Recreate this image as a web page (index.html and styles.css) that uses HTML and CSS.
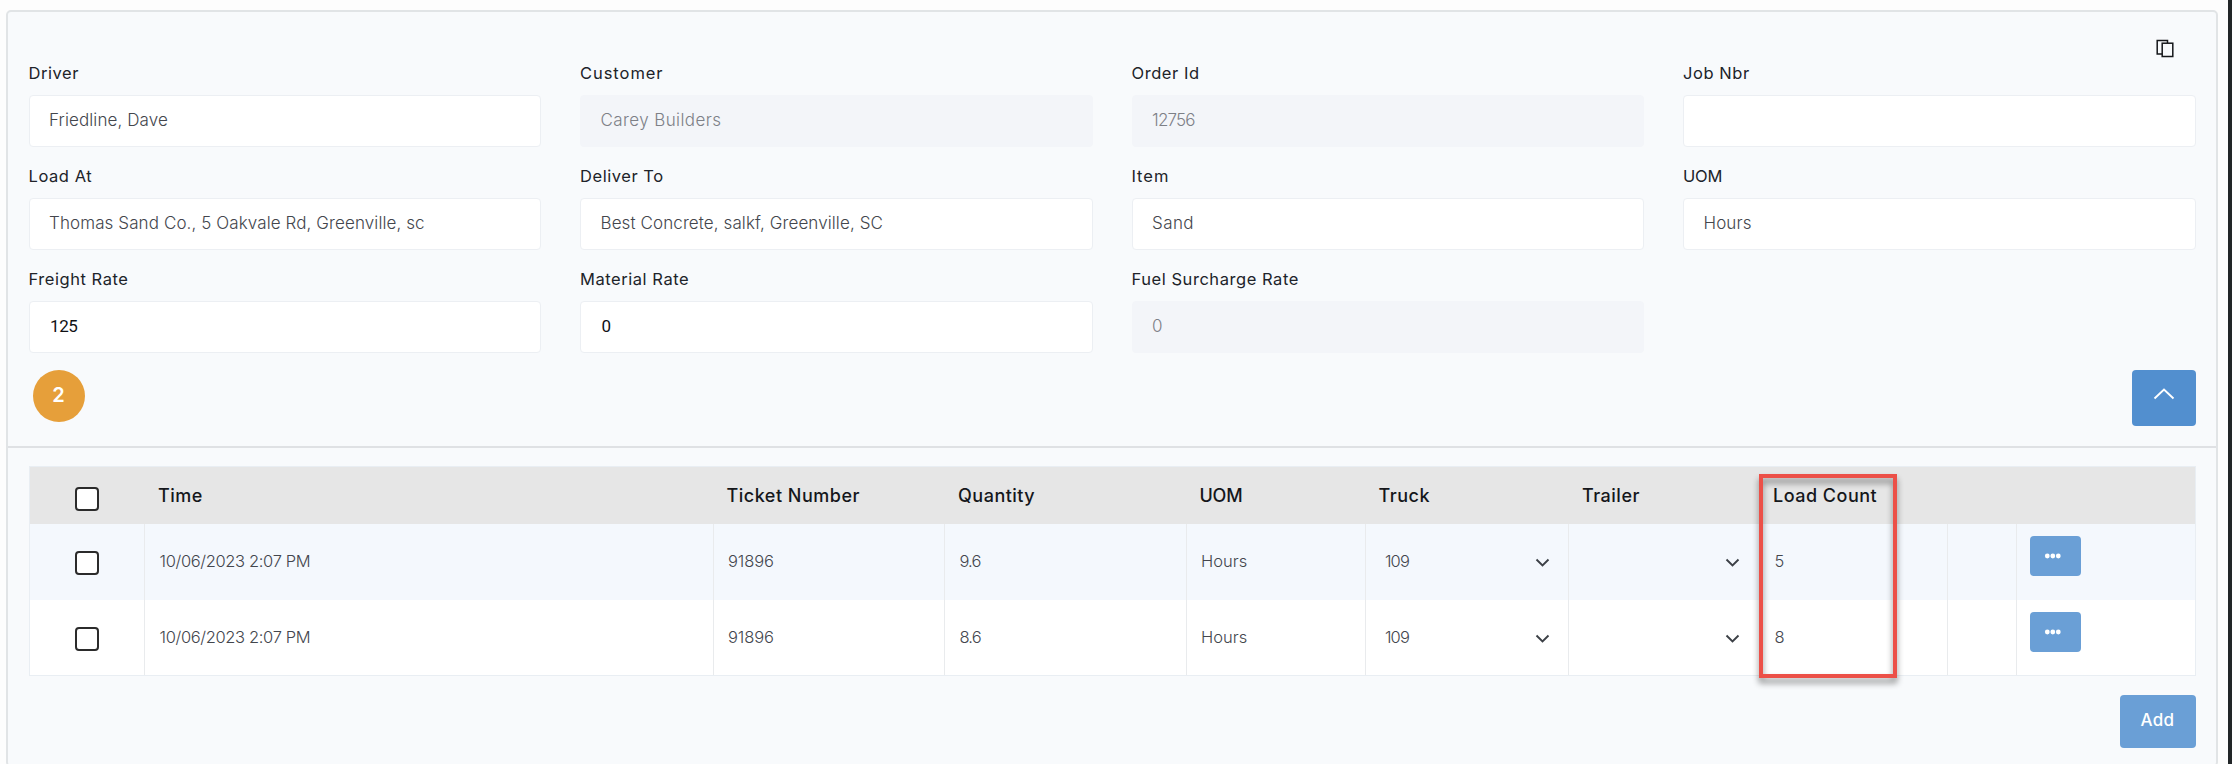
FILE: index.html
```html
<!DOCTYPE html>
<html lang="en">
<head>
<meta charset="utf-8">
<title>Order tickets</title>
<link rel="stylesheet" href="styles.css">
</head>
<body>
<main class="page">
  <section class="card">
    <div class="summary">
      <div class="toolbar">
        <svg class="copy" width="20" height="20" viewBox="0 0 20 20"><path d="M7 15H2.2V1.4H12.5V4"/><rect class="front" x="7.2" y="4.2" width="10.6" height="13.3"/></svg>
      </div>
      <div class="fields">
        <label class="field"><span class="name">Driver</span><span class="box">Friedline, Dave</span></label>
        <label class="field"><span class="name wide">Customer</span><span class="box off wide">Carey Builders</span></label>
        <label class="field"><span class="name">Order Id</span><span class="box off num">12756</span></label>
        <label class="field"><span class="name">Job Nbr</span><span class="box"></span></label>
        <label class="field"><span class="name">Load At</span><span class="box">Thomas Sand Co., 5 Oakvale Rd, Greenville, sc</span></label>
        <label class="field"><span class="name">Deliver To</span><span class="box">Best Concrete, salkf, Greenville, SC</span></label>
        <label class="field"><span class="name wide">Item</span><span class="box wide">Sand</span></label>
        <label class="field"><span class="name caps">UOM</span><span class="box">Hours</span></label>
        <label class="field"><span class="name">Freight Rate</span><span class="box rate">125</span></label>
        <label class="field"><span class="name">Material Rate</span><span class="box rate">0</span></label>
        <label class="field"><span class="name">Fuel Surcharge Rate</span><span class="box off">0</span></label>
      </div>
      <div class="actions">
        <span class="count">2</span>
        <button class="btn collapse"><svg width="22" height="14" viewBox="0 0 22 14"><path d="M1.5 11.5 11 2.5l9.5 9"/></svg></button>
      </div>
    </div>
    <div class="details">
      <div class="table">
        <div class="row head">
          <div class="cell check"><span class="tick"></span></div>
          <div class="cell">Time</div><div class="cell">Ticket Number</div><div class="cell">Quantity</div><div class="cell caps">UOM</div>
          <div class="cell">Truck</div><div class="cell">Trailer</div><div class="cell load">Load Count<span class="highlight"></span></div>
          <div class="cell"></div><div class="cell"></div>
        </div>
        <div class="row odd">
          <div class="cell check"><span class="tick"></span></div>
          <div class="cell date">10/06/2023 2:07 PM</div><div class="cell ticket">91896</div><div class="cell num">9.6</div><div class="cell">Hours</div>
          <div class="cell select num">109<svg width="15" height="10" viewBox="0 0 15 10"><path d="M1.5 1.5l6 6 6-6"/></svg></div>
          <div class="cell select"><svg width="15" height="10" viewBox="0 0 15 10"><path d="M1.5 1.5l6 6 6-6"/></svg></div>
          <div class="cell load">5</div><div class="cell"></div>
          <div class="cell menu"><button class="btn more"><svg width="18" height="6" viewBox="0 0 18 6"><circle cx="3.3" cy="3" r="2.4"/><circle cx="8.8" cy="3" r="2.4"/><circle cx="14.3" cy="3" r="2.4"/></svg></button></div>
        </div>
        <div class="row">
          <div class="cell check"><span class="tick"></span></div>
          <div class="cell date">10/06/2023 2:07 PM</div><div class="cell ticket">91896</div><div class="cell num">8.6</div><div class="cell">Hours</div>
          <div class="cell select num">109<svg width="15" height="10" viewBox="0 0 15 10"><path d="M1.5 1.5l6 6 6-6"/></svg></div>
          <div class="cell select"><svg width="15" height="10" viewBox="0 0 15 10"><path d="M1.5 1.5l6 6 6-6"/></svg></div>
          <div class="cell load">8</div><div class="cell"></div>
          <div class="cell menu"><button class="btn more"><svg width="18" height="6" viewBox="0 0 18 6"><circle cx="3.3" cy="3" r="2.4"/><circle cx="8.8" cy="3" r="2.4"/><circle cx="14.3" cy="3" r="2.4"/></svg></button></div>
        </div>
      </div>
      <div class="footer"><button class="btn add">Add</button></div>
    </div>
  </section>
</main>
</body>
</html>
```
FILE: styles.css
```css
* { box-sizing: border-box; }
body { margin: 0; font-family: Inter, "Open Sans", sans-serif; }
svg { display: block; fill: none; }
.page { height: 764px; padding: 10px 10px 0 6px; background: #fdfdfd; border-right: 4px solid #222628; overflow: hidden; }
.card { width: 2212px; height: 757px; border: 2px solid #e1e4e6; border-radius: 5px; background: #f8fafc; }

.summary { height: 436px; padding: 27px 20.5px 0; border-bottom: 2px solid #dfe1e4; }
.toolbar { display: flex; justify-content: flex-end; height: 22px; padding-right: 21px; }
.copy path, .copy rect { stroke: #15171a; stroke-width: 1.5; }
.copy .front { fill: #f8fafc; }

.fields { display: grid; grid-template-columns: repeat(4, 1fr); grid-auto-rows: 103px; column-gap: 39px; }
.field { display: flex; flex-direction: column; }
.name { height: 34px; line-height: 25px; font-size: 16.5px; letter-spacing: 0.55px; color: #202329; }
.name.wide { letter-spacing: 0.95px; }
.name.caps { letter-spacing: -0.2px; }
.box { display: flex; align-items: center; height: 52px; padding: 0 19.5px 2px; border: 1.5px solid #eceff3; border-radius: 4px; background: #fff; font-size: 17px; font-weight: 300; letter-spacing: 0.1px; color: #43464d; white-space: nowrap; }
.box.wide { letter-spacing: 0.4px; }
.box.off { background: #f3f5f9; border-color: #f3f5f9; color: #7d8087; }
.box.num { letter-spacing: -0.8px; }
.box.rate { font-family: Roboto, sans-serif; font-size: 17px; font-weight: 400; letter-spacing: -0.4px; color: #101114; padding-left: 20.5px; }

.actions { display: flex; justify-content: space-between; }
.count { width: 52px; height: 52px; margin-left: 4px; border-radius: 50%; background: #e69f3a; color: #fff; font-size: 20px; font-weight: 600; line-height: 50px; text-align: center; }
.btn { display: flex; justify-content: center; padding: 0; border: 0; border-radius: 4px; color: #fff; font-family: inherit; background: #6a9fd6; }
.btn path { stroke: #fff; stroke-width: 1.9; }
.btn circle { fill: #fff; }
.collapse { width: 64px; height: 56px; padding-top: 17px; background: #528fcf; }

.details { padding: 18px 20.5px 0; }
.table { border: 1px solid #e9eef3; }
.row { display: grid; grid-template-columns: 115.5px 568.5px 231.5px 241.5px 179px 203.5px 192px 187px 69px 1fr; height: 75.5px; background: #fff; }
.row.head { height: 57px; background: #e6e6e6; }
.row.odd { background: #f4f8fd; }
.cell { padding: 25px 0 0 14.5px; border-right: 1.5px solid #e9ebed; font-size: 16.5px; font-weight: 300; line-height: 25px; color: #43464d; white-space: nowrap; }
.cell:last-child { border-right: 0; }
.head .cell { padding: 16px 0 0 13px; border-color: transparent; font-size: 18px; font-weight: 450; letter-spacing: 0.5px; color: #15171b; }
.head .cell.caps { letter-spacing: -0.2px; }
.cell.num { letter-spacing: -0.9px; }
.cell.ticket { letter-spacing: -0.1px; }
.cell.date { letter-spacing: -0.35px; }
.cell.check, .head .cell.check { padding: 27px 0 0 45px; }
.head .cell.check { padding-top: 19.5px; }
.tick { display: block; width: 24px; height: 24px; border: 2px solid #2b2b2b; border-radius: 4px; background: #fff; }
.cell.select { display: flex; justify-content: space-between; padding-left: 19.5px; padding-right: 18.5px; }
.select svg { margin: 9px 0 0 auto; }
.select path { stroke: #3c4046; stroke-width: 1.9; }
.select:nth-child(7) { padding-right: 20px; border-right-color: transparent; }
.cell.load { position: relative; padding-left: 13.5px; }
.head .cell.load { padding-left: 12px; }
.highlight { position: absolute; left: -2px; top: 7px; z-index: 2; width: 138px; height: 204px; border: 4px solid #ec5048; filter: drop-shadow(0 5px 3px rgba(0, 0, 0, 0.45)); }
.cell.menu { padding-top: 12px; padding-left: 13px; }
.more { width: 51px; height: 40px; padding: 17px 6px 0 0; }
.footer { display: flex; justify-content: flex-end; padding-top: 18.5px; }
.add { width: 76px; height: 53px; font-size: 17px; font-weight: 500; line-height: 51px; letter-spacing: 0.3px; }
```
